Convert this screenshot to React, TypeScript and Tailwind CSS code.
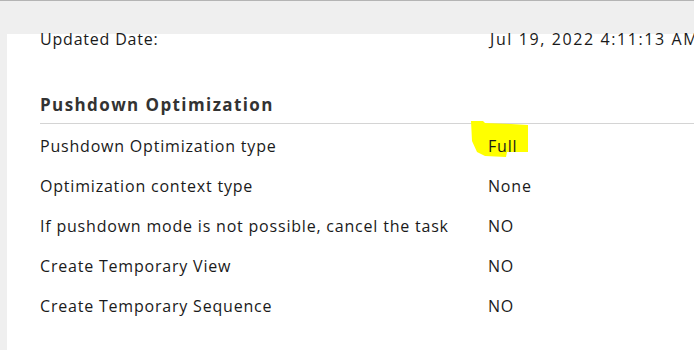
export default function App() {
  const rows: [string, string][] = [
    ["Optimization context type", "None"],
    ["If pushdown mode is not possible, cancel the task", "NO"],
    ["Create Temporary View", "NO"],
    ["Create Temporary Sequence", "NO"],
  ];
  return (
    <div className="w-[694px] h-[350px] overflow-hidden bg-[#efefef] border-t border-[#b4b4b4] flex flex-col" style={{ fontFamily: "'Open Sans', sans-serif" }}>
      <div className="h-[33px] shrink-0" />
      <div className="flex-1 ml-[7px] bg-white text-[#1a1a1a] text-[16px] tracking-[0.8px]">
        <div className="flex h-[14px] items-end pl-[33px]">
          <div className="w-[450px] shrink-0 leading-[20px] -mb-[1px]">Updated Date:</div>
          <div className="whitespace-nowrap leading-[20px] -mb-[1px] tracking-[1.6px]">Jul 19, 2022 4:11:13 AM</div>
        </div>
        <div className="ml-[33px] mt-[44px] h-[32px] border-b border-[#d4d4d4] font-bold text-[17px] text-[#333] leading-[26px] tracking-[1.4px]">
          Pushdown Optimization
        </div>
        <div className="pl-[33px] pt-[2px]">
          <div className="flex h-[40px] items-center">
            <div className="w-[448px]">Pushdown Optimization type</div>
            <div className="relative">
              <svg className="absolute left-[-17px] top-[-13px]" width="60" height="40" viewBox="0 0 60 40">
                <path d="M0 0 L12 0 L14 2 L40 3 L57 4 L57 31 L36 31 L35 36 L14 35 L6 31 L1 20 Z" fill="#ffff00" />
              </svg>
              <span className="relative">Full</span>
            </div>
          </div>
          {rows.map(([k, v]) => (
            <div key={k} className="flex h-[40px] items-center">
              <div className="w-[448px] whitespace-nowrap">{k}</div>
              <div>{v}</div>
            </div>
          ))}
        </div>
      </div>
    </div>
  );
}
